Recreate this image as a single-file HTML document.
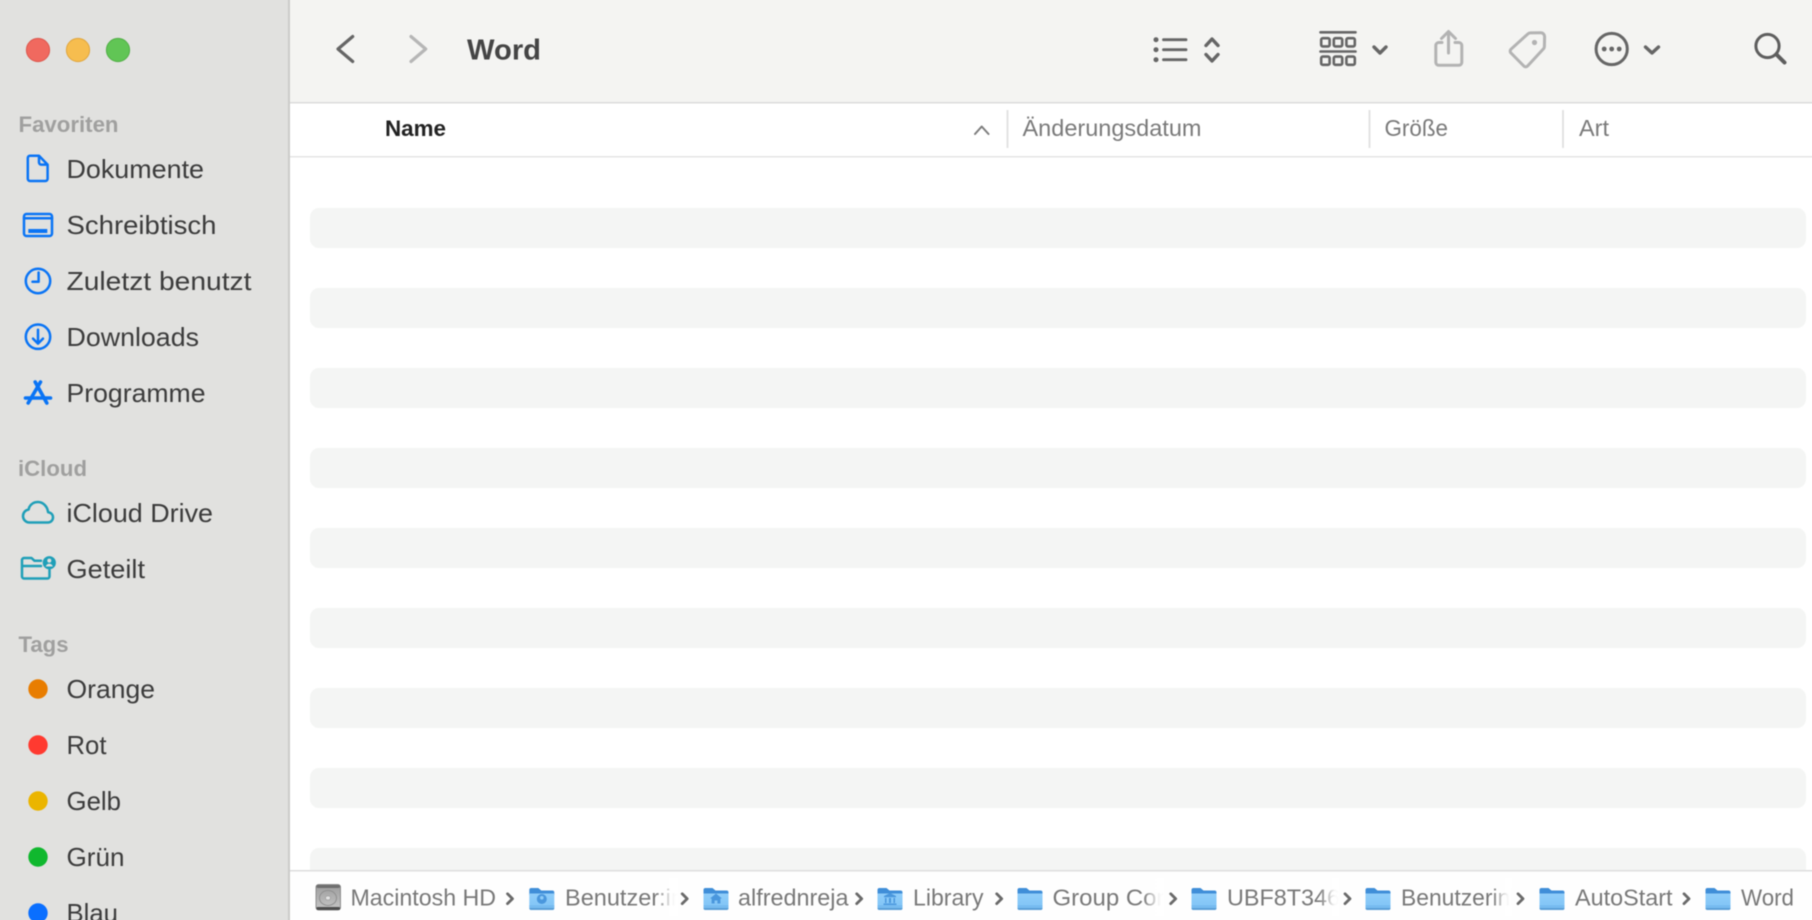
<!DOCTYPE html>
<html lang="de">
<head>
<meta charset="utf-8">
<title>Word</title>
<style>
html,body{margin:0;padding:0;width:1812px;height:920px;overflow:hidden;background:#fff}
svg{display:block;overflow:visible;filter:blur(.45px)}
text{font-family:"Liberation Sans",sans-serif}
.h{font-size:22px;font-weight:700;fill:#a0a09f}
.s{font-size:26px;fill:#3c3c3c}
.c{font-size:23px;fill:#7a7a7a}
.p{font-size:23px;fill:#787878}
.ch{fill:none;stroke:#6a6a6a;stroke-width:2.8;stroke-linecap:round;stroke-linejoin:round}
.b{fill:none;stroke:#0a74f5;stroke-width:2.5;stroke-linecap:round;stroke-linejoin:round}
.t{fill:none;stroke:#1f9fb8;stroke-width:2.5;stroke-linecap:round;stroke-linejoin:round}
.g{fill:none;stroke:#666;stroke-linecap:round;stroke-linejoin:round}
.l{fill:none;stroke:#b3b3b3;stroke-linecap:round;stroke-linejoin:round}
</style>
</head>
<body>
<svg width="1812" height="920" viewBox="0 0 1812 920" xmlns="http://www.w3.org/2000/svg">
<defs>
<linearGradient id="fb" x1="0" y1="0" x2="0" y2="1"><stop offset="0" stop-color="#90cefa"/><stop offset="1" stop-color="#7ec2f5"/></linearGradient>
<linearGradient id="fade" x1="0" y1="0" x2="1" y2="0"><stop offset="0" stop-color="#fff" stop-opacity="0"/><stop offset=".75" stop-color="#fff" stop-opacity=".95"/><stop offset="1" stop-color="#fff"/></linearGradient>
<linearGradient id="hd" x1="0" y1="0" x2="0" y2="1"><stop offset="0" stop-color="#9c9c9c"/><stop offset="1" stop-color="#c6c6c6"/></linearGradient>
<g id="folder">
<path d="M0 3a2 2 0 0 1 2-2h7l3 2.5h11a2 2 0 0 1 2 2V8H0z" fill="#3f8ed8"/>
<path d="M0 6.5h25V21a2 2 0 0 1-2 2H2a2 2 0 0 1-2-2z" fill="url(#fb)"/>
<rect x="0" y="18.6" width="25" height="1" fill="#6db3ec"/>
<path d="M0 20.8h25V21a2 2 0 0 1-2 2H2a2 2 0 0 1-2-2z" fill="#5a9fd8"/>
</g>
</defs>

<!-- sidebar -->
<rect x="-6" y="-6" width="294" height="932" fill="#e1e1df"/>
<rect x="288" y="-6" width="2" height="932" fill="#cbcbc9"/>
<circle cx="38" cy="50" r="11.6" fill="#f0695f" stroke="#dc564c" stroke-width="1"/>
<circle cx="78" cy="50" r="11.6" fill="#f6bd4f" stroke="#e0a53c" stroke-width="1"/>
<circle cx="118" cy="50" r="11.6" fill="#61c555" stroke="#50ae45" stroke-width="1"/>

<text class="h" x="18.5" y="132" textLength="100" lengthAdjust="spacingAndGlyphs">Favoriten</text>
<text class="s" x="66.5" y="178" textLength="137.5" lengthAdjust="spacingAndGlyphs">Dokumente</text>
<text class="s" x="66.5" y="234" textLength="150" lengthAdjust="spacingAndGlyphs">Schreibtisch</text>
<text class="s" x="66.5" y="290" textLength="185" lengthAdjust="spacingAndGlyphs">Zuletzt benutzt</text>
<text class="s" x="66.5" y="346" textLength="132.5" lengthAdjust="spacingAndGlyphs">Downloads</text>
<text class="s" x="66.5" y="402" textLength="139" lengthAdjust="spacingAndGlyphs">Programme</text>
<text class="h" x="18" y="476" textLength="69" lengthAdjust="spacingAndGlyphs">iCloud</text>
<text class="s" x="66.5" y="522" textLength="146.5" lengthAdjust="spacingAndGlyphs">iCloud Drive</text>
<text class="s" x="66.5" y="578" textLength="78.5" lengthAdjust="spacingAndGlyphs">Geteilt</text>
<text class="h" x="18.5" y="652" textLength="50" lengthAdjust="spacingAndGlyphs">Tags</text>
<text class="s" x="66.5" y="698" textLength="88.5" lengthAdjust="spacingAndGlyphs">Orange</text>
<text class="s" x="66.5" y="754" textLength="40" lengthAdjust="spacingAndGlyphs">Rot</text>
<text class="s" x="66.5" y="810" textLength="54.5" lengthAdjust="spacingAndGlyphs">Gelb</text>
<text class="s" x="66.5" y="866" textLength="58" lengthAdjust="spacingAndGlyphs">Grün</text>
<text class="s" x="66.5" y="922" textLength="51.5" lengthAdjust="spacingAndGlyphs">Blau</text>

<!-- sidebar icons -->
<path class="b" d="M30 155.8h9l8.6 8.8v14.2a2.2 2.2 0 0 1-2.2 2.2H30a2.2 2.2 0 0 1-2.2-2.2V158a2.2 2.2 0 0 1 2.2-2.2zM39 155.8v6.6a2.2 2.2 0 0 0 2.2 2.2h6.4"/>
<rect class="b" x="24" y="214" width="28" height="22" rx="2.5"/>
<path class="b" d="M24 218.2h28"/>
<rect x="28.3" y="229" width="19" height="4" fill="#0a74f5"/>
<circle class="b" cx="38" cy="281" r="12.2"/>
<path class="b" d="M38.6 272.5V281.7H32.5"/>
<circle class="b" cx="38" cy="336.7" r="12.2"/>
<path class="b" d="M38 329.8V343.2M33 338.6l5 5 5-5"/>
<g fill="none" stroke="#0a74f5" stroke-width="3.6" stroke-linecap="round">
<path d="M25.5 398H50.5"/>
<path d="M35.2 382L46.8 403"/>
<path d="M40.5 382L28.2 403"/>
</g>
<path class="t" d="M29.5 522.5H47.8c3 0 5.2-2.3 5.2-5.1 0-2.8-2.1-5-4.9-5.2C47.4 506.3 43 502 37.8 502c-3.9 0-6.9 2-8.6 5.3-.2.5-.3 1.5-.6 2.2-3.4.6-5.6 3.4-5.6 6.6 0 3.5 2.9 6.4 6.5 6.4z"/>
<path class="t" d="M22 566V560a2 2 0 0 1 2-2h7.5l3 2.8H41M22 566H41M22 566v10.5a2 2 0 0 0 2 2h23.5a2 2 0 0 0 2-2V570"/>
<circle cx="49.3" cy="562.7" r="6.6" fill="#1f9fb8"/>
<circle cx="49.3" cy="560.6" r="2" fill="#e1e1df"/>
<path d="M45.8 566.5c.6-2 2-2.8 3.5-2.8s2.9.8 3.5 2.8z" fill="#e1e1df"/>

<circle cx="38" cy="689" r="9.7" fill="#e87d00"/>
<circle cx="38" cy="745" r="9.7" fill="#ff3a30"/>
<circle cx="38" cy="801" r="9.7" fill="#ebb500"/>
<circle cx="38" cy="857" r="9.7" fill="#10b82e"/>
<circle cx="38" cy="913" r="9.7" fill="#0a6fff"/>

<!-- toolbar -->
<rect x="290" y="-6" width="1528" height="108" fill="#f4f4f2"/>
<rect x="290" y="102" width="1528" height="1.5" fill="#dcdcdb"/>
<path d="M352.7 36.5L338 49L352.7 61.5" fill="none" stroke="#666" stroke-width="3.2" stroke-linecap="round" stroke-linejoin="round"/>
<path d="M411 36.5L425.7 49L411 61.5" fill="none" stroke="#b6b6b6" stroke-width="3.2" stroke-linecap="round" stroke-linejoin="round"/>
<text x="467" y="59.5" font-size="29" font-weight="700" fill="#454545" textLength="74" lengthAdjust="spacingAndGlyphs">Word</text>

<!-- list view -->
<g fill="#666"><circle cx="1156" cy="39.7" r="2.5"/><circle cx="1156" cy="49.7" r="2.5"/><circle cx="1156" cy="59.7" r="2.5"/></g>
<path class="g" stroke-width="2.8" d="M1163.5 39.7H1186M1163.5 49.7H1186M1163.5 59.7H1186"/>
<path class="g" stroke-width="3.4" d="M1206 45.5L1212 39L1218 45.5M1206 54.5L1212 61L1218 54.5"/>

<!-- gallery / group -->
<path class="g" stroke-width="2.6" stroke-linecap="butt" d="M1320.5 32.3H1355.5M1320.5 51.5H1355.5"/>
<g class="g" stroke-width="2.6" style="fill:none">
<rect x="1321.2" y="38.2" width="8.4" height="8.2" rx="1.6"/><rect x="1333.8" y="38.2" width="8.4" height="8.2" rx="1.6"/><rect x="1346.4" y="38.2" width="8.4" height="8.2" rx="1.6"/>
<rect x="1321.2" y="56.6" width="8.4" height="8.2" rx="1.6"/><rect x="1333.8" y="56.6" width="8.4" height="8.2" rx="1.6"/><rect x="1346.4" y="56.6" width="8.4" height="8.2" rx="1.6"/>
</g>
<path class="g" stroke-width="3.4" d="M1374 47L1380 53L1386 47"/>

<!-- share -->
<path class="l" stroke-width="3" d="M1442 42.5h-3.2a3 3 0 0 0-3 3V62.3a3 3 0 0 0 3 3h20a3 3 0 0 0 3-3V45.5a3 3 0 0 0-3-3H1455"/>
<path class="l" stroke-width="3" d="M1448.5 53V32M1441.5 38.5L1448.5 31.5L1455.5 38.5"/>

<!-- tag -->
<path class="l" stroke-width="3" d="M1511 49.2L1528 33.8a3.5 3.5 0 0 1 2.4-.9l10.4-.1a3.8 3.8 0 0 1 3.8 3.8l-.2 9.9a3.5 3.5 0 0 1-1 2.4L1527.6 66a2.6 2.6 0 0 1-3.8 0L1511 53a2.6 2.6 0 0 1 0-3.8z"/>
<circle cx="1534.5" cy="42.5" r="2.6" fill="#b3b3b3"/>

<!-- more -->
<circle class="g" stroke-width="3" cx="1611.7" cy="49" r="15.6"/>
<g fill="#666"><circle cx="1604.2" cy="49" r="2.4"/><circle cx="1611.7" cy="49" r="2.4"/><circle cx="1619.2" cy="49" r="2.4"/></g>
<path class="g" stroke-width="3.4" d="M1645.5 47L1652 53L1658.5 47"/>

<!-- search -->
<circle cx="1767.5" cy="46" r="11.6" fill="none" stroke="#5e5e5e" stroke-width="3"/>
<path d="M1776.5 54.5L1784.5 62.5" fill="none" stroke="#5e5e5e" stroke-width="4" stroke-linecap="round"/>

<!-- column header -->
<rect x="290" y="156" width="1528" height="1.5" fill="#e4e4e4"/>
<text x="385" y="136" font-size="22" font-weight="700" fill="#222" textLength="61" lengthAdjust="spacingAndGlyphs">Name</text>
<path d="M975 134L981.7 126.5L988.5 134" fill="none" stroke="#7d7d7d" stroke-width="2" stroke-linecap="round" stroke-linejoin="round"/>
<rect x="1006.5" y="110" width="2" height="38" fill="#e3e3e3"/>
<rect x="1368.5" y="110" width="2" height="38" fill="#e3e3e3"/>
<rect x="1562" y="110" width="2" height="38" fill="#e3e3e3"/>
<text class="c" x="1022.5" y="136" textLength="179" lengthAdjust="spacingAndGlyphs">Änderungsdatum</text>
<text class="c" x="1384.5" y="136" textLength="63.5" lengthAdjust="spacingAndGlyphs">Größe</text>
<text class="c" x="1579" y="136" textLength="30" lengthAdjust="spacingAndGlyphs">Art</text>

<!-- stripes -->
<g fill="#f4f5f4">
<rect x="310" y="208" width="1496" height="40" rx="9"/>
<rect x="310" y="288" width="1496" height="40" rx="9"/>
<rect x="310" y="368" width="1496" height="40" rx="9"/>
<rect x="310" y="448" width="1496" height="40" rx="9"/>
<rect x="310" y="528" width="1496" height="40" rx="9"/>
<rect x="310" y="608" width="1496" height="40" rx="9"/>
<rect x="310" y="688" width="1496" height="40" rx="9"/>
<rect x="310" y="768" width="1496" height="40" rx="9"/>
<rect x="310" y="848" width="1496" height="40" rx="9"/>
</g>

<!-- path bar -->
<rect x="290" y="870" width="1528" height="56" fill="#fefefe"/>
<rect x="290" y="870" width="1528" height="1.5" fill="#dddddd"/>

<!-- HD icon -->
<rect x="316" y="884.5" width="24.5" height="25.5" rx="2.5" fill="url(#hd)" stroke="#7c7c7c" stroke-width=".8"/>
<rect x="316.5" y="885" width="23.5" height="3" rx="1.5" fill="#6e6e6e"/>
<rect x="316.5" y="907" width="23.5" height="3" rx="1" fill="#4d4d4d"/>
<ellipse cx="328" cy="898" rx="8.5" ry="7.5" fill="none" stroke="#8f8f8f" stroke-width="1"/>
<ellipse cx="328" cy="898" rx="2.5" ry="2" fill="#e2e2e2" stroke="#8f8f8f" stroke-width=".6"/>

<text class="p" x="350.5" y="905.7" textLength="145.5" lengthAdjust="spacingAndGlyphs">Macintosh HD</text>
<path class="ch" d="M507.5 893.8L512.5 898.7L507.5 903.6"/>

<use href="#folder" x="529.3" y="887"/>
<circle cx="541.8" cy="899" r="5" fill="#4a97dd"/><circle cx="541.8" cy="897.8" r="1.8" fill="#8ccbf8"/>
<text class="p" x="565" y="905.7" textLength="119" lengthAdjust="spacingAndGlyphs">Benutzer:in</text>
<rect x="655" y="878" width="24" height="38" fill="url(#fade)"/>
<rect x="678" y="878" width="24" height="38" fill="#fefefe"/>
<path class="ch" d="M682.2 893.8L687.2 898.7L682.2 903.6"/>

<use href="#folder" x="703.5" y="887"/>
<path d="M716 893.5l-6 5h1.6v5h3v-3h2.8v3h3v-5h1.6z" fill="#4a97dd"/>
<text class="p" x="738" y="905.7" textLength="110.5" lengthAdjust="spacingAndGlyphs">alfrednreja</text>
<path class="ch" d="M856.7 893.8L861.7 898.7L856.7 903.6"/>

<use href="#folder" x="877.5" y="887"/>
<path d="M890 893l-6 3v1.2h12V896zM885 898v5h1.5v-5zM889 898v5h2v-5zM893.5 898v5h1.5v-5zM883.5 903.5h13v1.5h-13z" fill="#4a97dd"/>
<text class="p" x="913" y="905.7" textLength="70.5" lengthAdjust="spacingAndGlyphs">Library</text>
<path class="ch" d="M996.7 893.8L1001.7 898.7L996.7 903.6"/>

<use href="#folder" x="1017.5" y="887"/>
<text class="p" x="1052.5" y="905.7" textLength="124" lengthAdjust="spacingAndGlyphs">Group Cont</text>
<rect x="1143" y="878" width="22" height="38" fill="url(#fade)"/>
<rect x="1164" y="878" width="26" height="38" fill="#fefefe"/>
<path class="ch" d="M1170.7 893.8L1175.7 898.7L1170.7 903.6"/>

<use href="#folder" x="1191.5" y="887"/>
<text class="p" x="1227" y="905.7" textLength="126" lengthAdjust="spacingAndGlyphs">UBF8T3467</text>
<rect x="1319" y="878" width="21" height="38" fill="url(#fade)"/>
<rect x="1339" y="878" width="25" height="38" fill="#fefefe"/>
<path class="ch" d="M1345 893.8L1350 898.7L1345 903.6"/>

<use href="#folder" x="1365.5" y="887"/>
<text class="p" x="1401" y="905.7" textLength="122" lengthAdjust="spacingAndGlyphs">Benutzerinh</text>
<rect x="1492" y="878" width="21" height="38" fill="url(#fade)"/>
<rect x="1512" y="878" width="25" height="38" fill="#fefefe"/>
<path class="ch" d="M1518 893.8L1523 898.7L1518 903.6"/>

<use href="#folder" x="1539.5" y="887"/>
<text class="p" x="1575" y="905.7" textLength="97.5" lengthAdjust="spacingAndGlyphs">AutoStart</text>
<path class="ch" d="M1684 893.8L1689 898.7L1684 903.6"/>

<use href="#folder" x="1705.5" y="887"/>
<text class="p" x="1741" y="905.7" textLength="53" lengthAdjust="spacingAndGlyphs">Word</text>
</svg>
</body>
</html>
